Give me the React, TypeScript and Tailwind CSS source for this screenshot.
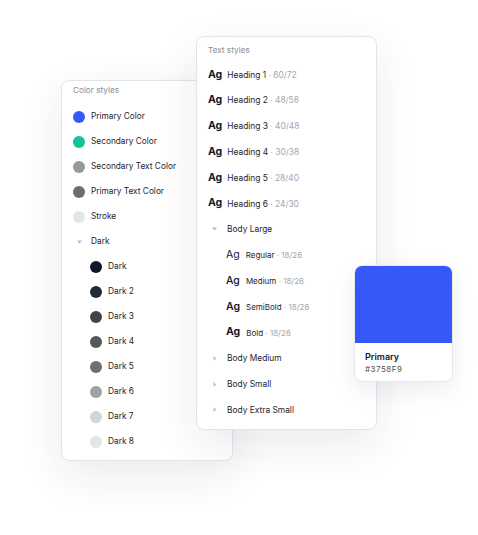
import React from "react";

const colorRows = [
  { name: "Primary Color", color: "#3758F9" },
  { name: "Secondary Color", color: "#13C296" },
  { name: "Secondary Text Color", color: "#97999C" },
  { name: "Primary Text Color", color: "#6B6D70" },
  { name: "Stroke", color: "#E3E5E8" },
];

const darkRows = [
  { name: "Dark", color: "#111928" },
  { name: "Dark 2", color: "#1F2A37" },
  { name: "Dark 3", color: "#3F4349" },
  { name: "Dark 4", color: "#56585C" },
  { name: "Dark 5", color: "#6E7073" },
  { name: "Dark 6", color: "#A1A2A5" },
  { name: "Dark 7", color: "#D3D4D6" },
  { name: "Dark 8", color: "#E4E5E8" },
];

const headings = [
  ["Heading 1", "60/72"],
  ["Heading 2", "48/58"],
  ["Heading 3", "40/48"],
  ["Heading 4", "30/38"],
  ["Heading 5", "28/40"],
  ["Heading 6", "24/30"],
];

const bodyLarge = [
  { name: "Regular", w: "font-normal" },
  { name: "Medium", w: "font-medium" },
  { name: "SemiBold", w: "font-semibold" },
  { name: "Bold", w: "font-bold" },
];

function Down() {
  return (
    <svg width="5" height="4" viewBox="0 0 5 4" className="shrink-0">
      <path d="M0 0.5 L5 0.5 L2.5 3.5 Z" fill="#B5B8BD" />
    </svg>
  );
}

function Right() {
  return (
    <svg width="4" height="5" viewBox="0 0 4 5" className="shrink-0">
      <path d="M0.5 0 L3.5 2.5 L0.5 5 Z" fill="#C2C5CA" />
    </svg>
  );
}

export default function App() {
  return (
    <div
      className="relative w-[478px] h-[535px] bg-white overflow-hidden"
      style={{ fontFamily: "Inter, 'Noto Sans', sans-serif" }}
    >
      {/* Color styles card */}
      <div className="absolute left-[61px] top-[80px] w-[172px] h-[381px] rounded-[8px] border border-[#E2E4E8] bg-white shadow-[0_14px_44px_rgba(20,30,60,0.09)] flex flex-col">
        <div className="h-[23px] flex items-center pb-[4px] pl-[11px] text-[8.2px] leading-none text-[#8A8D93]">
          Color styles
        </div>
        {colorRows.map((r) => (
          <div key={r.name} className="h-[25px] flex items-center pl-[11px] gap-[6px]">
            <span className="w-[12px] h-[12px] rounded-full shrink-0" style={{ background: r.color }} />
            <span className="text-[8.3px] leading-none text-[#1F242C]">{r.name}</span>
          </div>
        ))}
        <div className="h-[25px] flex items-center pl-[15px] gap-[9px]">
          <Down />
          <span className="text-[8.3px] leading-none text-[#1F242C]">Dark</span>
        </div>
        {darkRows.map((r) => (
          <div key={r.name} className="h-[25px] flex items-center pl-[28px] gap-[6px]">
            <span className="w-[12px] h-[12px] rounded-full shrink-0" style={{ background: r.color }} />
            <span className="text-[8.3px] leading-none text-[#1F242C]">{r.name}</span>
          </div>
        ))}
      </div>

      {/* Text styles card */}
      <div className="absolute left-[196px] top-[36px] w-[181px] h-[394px] rounded-[8px] border border-[#E2E4E8] bg-white shadow-[0_14px_44px_rgba(20,30,60,0.09)] flex flex-col">
        <div className="h-[25px] flex items-center pt-[1px] pl-[11px] text-[8.2px] leading-none text-[#8A8D93]">
          Text styles
        </div>
        {headings.map(([n, v]) => (
          <div key={n} className="h-[25.77px] flex items-center pl-[11px] gap-[5px]">
            <span className="text-[10.5px] leading-none font-bold text-[#111827]">Ag</span>
            <span className="text-[8.4px] leading-none text-[#1F242C]">
              {n}
              <span className="text-[#A3A6AB]"> · {v}</span>
            </span>
          </div>
        ))}
        <div className="h-[25.77px] flex items-center pl-[15px] gap-[10px]">
          <Down />
          <span className="text-[8.4px] leading-none text-[#1F242C]">Body Large</span>
        </div>
        {bodyLarge.map((b) => (
          <div key={b.name} className="h-[25.77px] flex items-center pl-[29px] gap-[6px]">
            <span className={`text-[10.5px] leading-none text-[#111827] ${b.w}`}>Ag</span>
            <span className="text-[8px] leading-none text-[#1F242C]">
              {b.name}
              <span className="text-[#A3A6AB]"> · 18/26</span>
            </span>
          </div>
        ))}
        {["Body Medium", "Body Small", "Body Extra Small"].map((n) => (
          <div key={n} className="h-[25.77px] flex items-center pl-[16px] gap-[10px]">
            <Right />
            <span className="text-[8.4px] leading-none text-[#1F242C]">{n}</span>
          </div>
        ))}
      </div>

      {/* Swatch card */}
      <div className="absolute left-[354px] top-[265px] w-[99px] h-[117px] rounded-[8px] border border-[#E6E8EB] bg-white overflow-hidden shadow-[0_8px_24px_rgba(20,30,60,0.08)] flex flex-col">
        <div className="h-[77px] bg-[#3758F9] shrink-0" />
        <div className="flex flex-col pl-[10px] pt-[9px] gap-[4px]">
          <span className="text-[9px] leading-none font-semibold text-[#111827]">Primary</span>
          <span className="text-[8px] leading-none tracking-[0.5px] text-[#4B5058]">#3758F9</span>
        </div>
      </div>
    </div>
  );
}
